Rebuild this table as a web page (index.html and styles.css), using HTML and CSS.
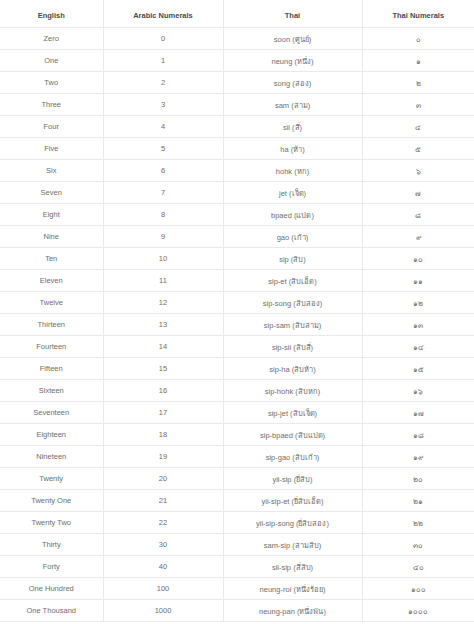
FILE: index.html
```html
<!DOCTYPE html>
<html lang="en">
<head>
<meta charset="utf-8">
<link rel="stylesheet" href="styles.css">
</head>
<body>
<table class="numbers">
  <colgroup>
    <col class="c1"><col class="c2"><col class="c3"><col class="c4">
  </colgroup>
  <thead>
    <tr><th>English</th><th>Arabic Numerals</th><th>Thai</th><th>Thai Numerals</th></tr>
  </thead>
  <tbody>
    <tr><td>Zero</td><td>0</td><td>soon (ศูนย์)</td><td>๐</td></tr>
    <tr><td>One</td><td>1</td><td>neung (หนึ่ง)</td><td>๑</td></tr>
    <tr><td>Two</td><td>2</td><td>song (สอง)</td><td>๒</td></tr>
    <tr><td>Three</td><td>3</td><td>sam (สาม)</td><td>๓</td></tr>
    <tr><td>Four</td><td>4</td><td>sii (สี่)</td><td>๔</td></tr>
    <tr><td>Five</td><td>5</td><td>ha (ห้า)</td><td>๕</td></tr>
    <tr><td>Six</td><td>6</td><td>hohk (หก)</td><td>๖</td></tr>
    <tr><td>Seven</td><td>7</td><td>jet (เจ็ด)</td><td>๗</td></tr>
    <tr><td>Eight</td><td>8</td><td>bpaed (แปด)</td><td>๘</td></tr>
    <tr><td>Nine</td><td>9</td><td>gao (เก้า)</td><td>๙</td></tr>
    <tr><td>Ten</td><td>10</td><td>sip (สิบ)</td><td>๑๐</td></tr>
    <tr><td>Eleven</td><td>11</td><td>sip-et (สิบเอ็ด)</td><td>๑๑</td></tr>
    <tr><td>Twelve</td><td>12</td><td>sip-song (สิบสอง)</td><td>๑๒</td></tr>
    <tr><td>Thirteen</td><td>13</td><td>sip-sam (สิบสาม)</td><td>๑๓</td></tr>
    <tr><td>Fourteen</td><td>14</td><td>sip-sii (สิบสี่)</td><td>๑๔</td></tr>
    <tr><td>Fifteen</td><td>15</td><td>sip-ha (สิบห้า)</td><td>๑๕</td></tr>
    <tr><td>Sixteen</td><td>16</td><td>sip-hohk (สิบหก)</td><td>๑๖</td></tr>
    <tr><td>Seventeen</td><td>17</td><td>sip-jet (สิบเจ็ด)</td><td>๑๗</td></tr>
    <tr><td>Eighteen</td><td>18</td><td>sip-bpaed (สิบแปด)</td><td>๑๘</td></tr>
    <tr><td>Nineteen</td><td>19</td><td>sip-gao (สิบเก้า)</td><td>๑๙</td></tr>
    <tr><td>Twenty</td><td>20</td><td>yii-sip (ยี่สิบ)</td><td>๒๐</td></tr>
    <tr><td>Twenty One</td><td>21</td><td>yii-sip-et (ยี่สิบเอ็ด)</td><td>๒๑</td></tr>
    <tr><td>Twenty Two</td><td>22</td><td>yii-sip-song (ยี่สิบสอง)</td><td>๒๒</td></tr>
    <tr><td>Thirty</td><td>30</td><td>sam-sip (สามสิบ)</td><td>๓๐</td></tr>
    <tr><td>Forty</td><td>40</td><td>sii-sip (สี่สิบ)</td><td>๔๐</td></tr>
    <tr><td>One Hundred</td><td>100</td><td>neung-roi (หนึ่งร้อย)</td><td>๑๐๐</td></tr>
    <tr><td>One Thousand</td><td>1000</td><td>neung-pan (หนึ่งพัน)</td><td>๑๐๐๐</td></tr>
  </tbody>
</table>
</body>
</html>
```
FILE: styles.css
```css
html, body {
  margin: 0;
  padding: 0;
  background: #ffffff;
}
body {
  font-family: "Liberation Sans", Arial, "Noto Sans", sans-serif;
  font-size: 7.5px;
  color: #6e6e6e;
}
.numbers {
  width: 474px;
  border-collapse: collapse;
  table-layout: fixed;
}
.c1 { width: 103px; }
.c2 { width: 120px; }
.c3 { width: 139px; }
.c4 { width: 112px; }
.numbers th,
.numbers td {
  text-align: center;
  vertical-align: middle;
  padding: 0;
  border-left: 1px solid #e9e9e9;
  border-bottom: 1px solid #e9e9e9;
  white-space: nowrap;
  overflow: hidden;
}
.numbers th:first-child,
.numbers td:first-child {
  border-left: none;
}
.numbers th {
  height: 23px;
  padding-top: 4px;
  font-weight: bold;
  color: #4a4a4a;
}
.numbers td {
  height: 21px;
}
```
